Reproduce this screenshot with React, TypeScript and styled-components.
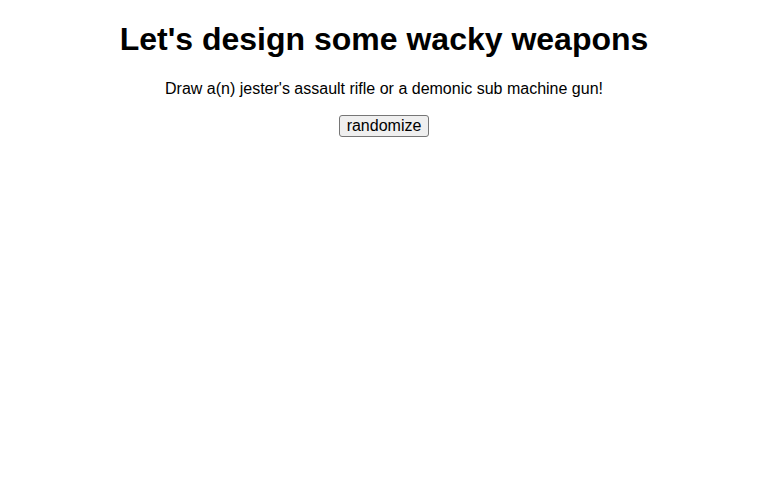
import React, { useState } from "react";
import styled, { createGlobalStyle } from "styled-components";

const GlobalStyle = createGlobalStyle`
  body {
    margin: 0;
    font-family: "Liberation Sans", Arial, sans-serif;
    background: #ffffff;
    color: #000000;
  }
`;

const Page = styled.main`
  display: flow-root;
  padding: 21px 8px 0;
  text-align: center;
`;

const Title = styled.h1`
  font-size: 32px;
  font-weight: bold;
  margin: 0 0 22px;
`;

const Prompt = styled.p`
  font-size: 16px;
  margin: 0 0 17px;
`;

const RandomButton = styled.button`
  font-family: "Liberation Sans", Arial, sans-serif;
  font-size: 16px;
  line-height: 18px;
  color: #000000;
  background: #efefef;
  border: 1px solid #767676;
  border-radius: 3px;
  padding: 1px 7px;
  cursor: pointer;
`;

const weapons = [
  ["jester's", "assault rifle"],
  ["demonic", "sub machine gun"],
];

export default function App() {
  const [pair] = useState(weapons);
  return (
    <Page>
      <GlobalStyle />
      <Title>Let's design some wacky weapons</Title>
      <Prompt>
        Draw a(n) {pair[0][0]} {pair[0][1]} or a {pair[1][0]} {pair[1][1]}!
      </Prompt>
      <RandomButton>randomize</RandomButton>
    </Page>
  );
}
